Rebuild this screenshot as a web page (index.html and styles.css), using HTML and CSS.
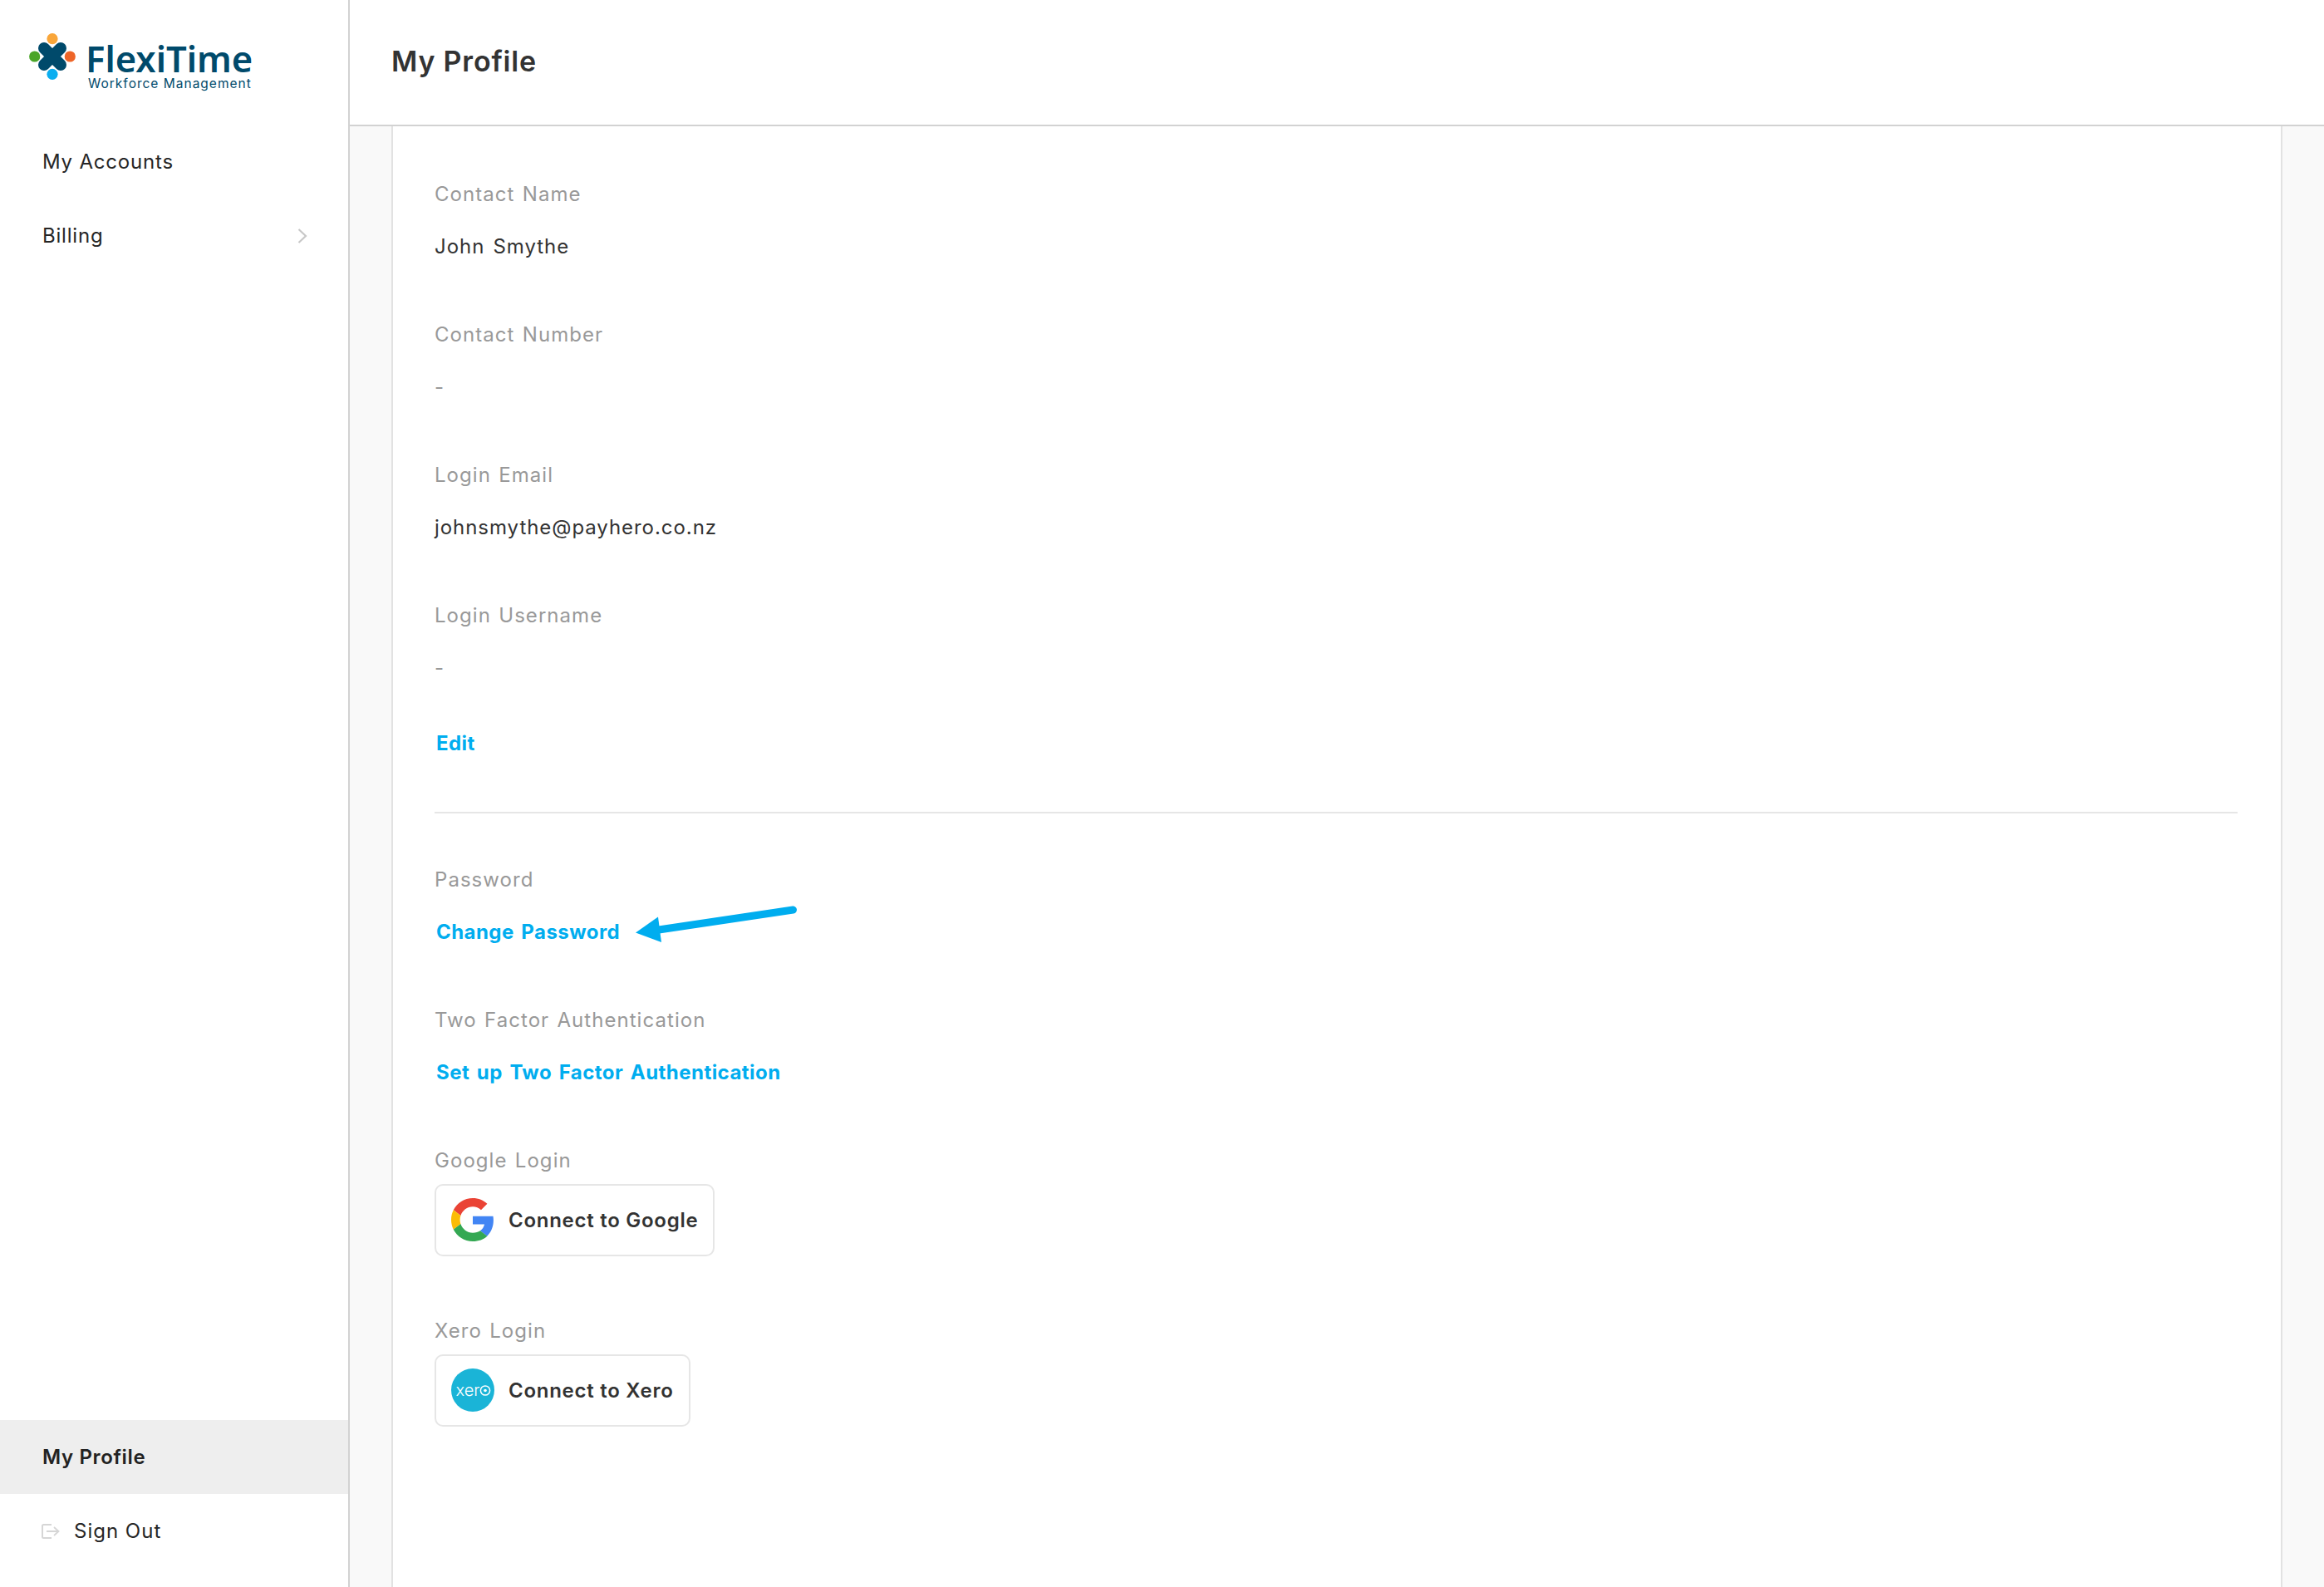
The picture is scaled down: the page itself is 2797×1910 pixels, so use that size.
FILE: index.html
```html
<!DOCTYPE html>
<html lang="en">
<head>
<meta charset="utf-8">
<title>My Profile</title>
<link rel="stylesheet" href="styles.css">
</head>
<body>
<div class="app">
  <aside class="sidebar">
    <div class="brand">
      <svg class="brand-mark" viewBox="0 0 60 60" width="60" height="60" aria-hidden="true">
        <path d="M20 20 L40 40 M40 20 L20 40" stroke="#004a6b" stroke-width="14" stroke-linecap="round" fill="none"/>
        <circle cx="30" cy="8.7" r="6.6" fill="#f9a63a"/>
        <circle cx="8.7" cy="30" r="6.6" fill="#4aa528"/>
        <circle cx="51.3" cy="30" r="6.6" fill="#ee6528"/>
        <circle cx="30" cy="51.3" r="6.6" fill="#0aaef0"/>
      </svg>
      <div class="brand-text">
        <div class="brand-name">FlexiTime</div>
        <div class="brand-sub">Workforce Management</div>
      </div>
    </div>
    <nav class="nav">
      <a class="nav-item">My Accounts</a>
      <a class="nav-item">Billing
        <svg class="chevron" viewBox="0 0 12 20" width="12" height="20" aria-hidden="true"><path d="M1.5 2 L10 10 L1.5 18" fill="none" stroke="#c8c8c8" stroke-width="2.2"/></svg>
      </a>
    </nav>
    <nav class="nav nav-bottom">
      <a class="nav-item is-active">My Profile</a>
      <a class="nav-item nav-signout">
        <svg class="signout-icon" viewBox="0 0 22 18" width="22" height="18" aria-hidden="true">
          <path d="M12 1 H2.5 Q1 1 1 2.5 V15.5 Q1 17 2.5 17 H12" fill="none" stroke="#d6d6d6" stroke-width="2"/>
          <path d="M6 9 H20 M15 4 L20.5 9 L15 14" fill="none" stroke="#d6d6d6" stroke-width="1.8"/>
        </svg>
        <span class="signout-text">Sign Out</span></a>
    </nav>
  </aside>
  <main class="main">
    <header class="topbar"><h1 class="title">My Profile</h1></header>
    <div class="canvas">
      <section class="panel">
        <div class="fields">
          <div class="field"><div class="label">Contact Name</div><div class="value">John Smythe</div></div>
          <div class="field"><div class="label">Contact Number</div><div class="value muted">-</div></div>
          <div class="field"><div class="label">Login Email</div><div class="value">johnsmythe@payhero.co.nz</div></div>
          <div class="field"><div class="label">Login Username</div><div class="value muted">-</div></div>
        </div>
        <a class="link edit">Edit</a>
        <hr class="rule">
        <div class="fields">
          <div class="field">
            <div class="label">Password</div>
            <a class="value link">Change Password</a>
            <svg class="arrow" viewBox="0 0 200 50" width="200" height="50" aria-hidden="true">
              <path d="M191.5 8 L30 32" stroke="#00adef" stroke-width="9" stroke-linecap="round" fill="none"/>
              <path d="M2 35.6 L29 16.6 L33 47 Z" fill="#00adef"/>
            </svg>
          </div>
          <div class="field"><div class="label">Two Factor Authentication</div><a class="value link">Set up Two Factor Authentication</a></div>
          <div class="field">
            <div class="label label-tight">Google Login</div>
            <button class="connect" type="button">
              <svg viewBox="0 0 48 48" width="52" height="52" aria-hidden="true">
                <path fill="#EA4335" d="M24 9.5c3.54 0 6.71 1.22 9.21 3.6l6.85-6.85C35.9 2.38 30.47 0 24 0 14.62 0 6.51 5.38 2.56 13.22l7.98 6.19C12.43 13.72 17.74 9.5 24 9.5z"/>
                <path fill="#4285F4" d="M46.98 24.55c0-1.57-.15-3.09-.38-4.55H24v9.02h12.94c-.58 2.96-2.26 5.48-4.78 7.18l7.73 6c4.51-4.18 7.09-10.36 7.09-17.65z"/>
                <path fill="#FBBC05" d="M10.53 28.59c-.48-1.45-.76-2.99-.76-4.59s.27-3.14.76-4.59l-7.98-6.19C.92 16.46 0 20.12 0 24c0 3.88.92 7.54 2.56 10.78l7.97-6.19z"/>
                <path fill="#34A853" d="M24 48c6.48 0 11.93-2.13 16.03-5.81l-7.73-6c-2.15 1.45-4.92 2.3-8.3 2.3-6.26 0-11.57-4.22-13.47-9.91l-7.98 6.19C6.51 42.62 14.62 48 24 48z"/>
              </svg>
              <span>Connect to Google</span>
            </button>
          </div>
          <div class="field">
            <div class="label label-tight">Xero Login</div>
            <button class="connect" type="button">
              <svg viewBox="0 0 52 52" width="52" height="52" aria-hidden="true">
                <circle cx="26" cy="26" r="26" fill="#1ab4d7"/>
                <text class="xero-word" x="5.5" y="32.5">xer</text>
                <circle cx="41" cy="26.5" r="5.6" fill="none" stroke="#fff" stroke-width="1.5"/>
                <circle cx="41" cy="26.5" r="1.8" fill="#fff"/>
              </svg>
              <span>Connect to Xero</span>
            </button>
          </div>
        </div>
      </section>
    </div>
  </main>
</div>
</body>
</html>
```
FILE: styles.css
```css
* { box-sizing: border-box; }
html, body { margin: 0; height: 100%; }
body {
  font-family: "Inter", "Liberation Sans", sans-serif;
  font-size: 24px;
  color: #333;
  background: #fff;
  overflow: hidden;
}
.app { display: flex; height: 1910px; }

.sidebar {
  width: 421px;
  flex: none;
  display: flex;
  flex-direction: column;
  border-right: 2px solid #d2d2d2;
  background: #fff;
}
.brand {
  height: 150px;
  flex: none;
  display: flex;
  align-items: flex-start;
  gap: 10px;
  padding: 38px 0 0 33px;
}
.brand-mark { flex: none; }
.brand-text { display: flex; flex-direction: column; }
.brand-name {
  font-family: "Noto Sans", sans-serif;
  font-size: 43.5px;
  line-height: 40px;
  margin-top: 11.5px;
  font-weight: 600;
  color: #004a6b;
}
.brand-sub {
  font-size: 15.5px;
  line-height: 18px;
  letter-spacing: 1px;
  color: #004a6b;
  margin-top: 2.5px;
  padding-left: 3px;
}
.nav { display: flex; flex-direction: column; }
.nav-bottom { margin-top: auto; padding-bottom: 23px; }
.nav-item {
  height: 89px;
  flex: none;
  display: flex;
  align-items: center;
  justify-content: space-between;
  padding: 0 49px 0 51px;
  color: #262626;
  font-size: 24px;
  font-weight: 375;
  letter-spacing: 0.8px;
}
.is-active { background: #eee; font-weight: 600; color: #222; letter-spacing: 0.65px; }
.nav-signout { justify-content: flex-start; gap: 17px; padding-left: 50px; }
.signout-text { letter-spacing: 1px; }
.chevron { flex: none; }
.signout-icon { flex: none; }

.main { flex: 1; display: flex; flex-direction: column; min-width: 0; }
.topbar {
  height: 152px;
  flex: none;
  display: flex;
  align-items: center;
  padding: 0 0 3px 50px;
  border-bottom: 2px solid #d2d2d2;
  background: #fff;
}
.title { margin: 0; font-size: 34px; font-weight: 600; color: #333; letter-spacing: 0.8px; }
.canvas { flex: 1; background: #f9f9f9; padding: 0 50px 0 50px; min-height: 0; }
.panel {
  height: 100%;
  background: #fff;
  border-left: 2px solid #e2e2e2;
  border-right: 2px solid #e2e2e2;
  padding: 66px 52px 0 50px;
}
.fields { display: flex; flex-direction: column; gap: 74px; }
.field { position: relative; display: flex; flex-direction: column; align-items: flex-start; }
.label { height: 32px; line-height: 32px; color: #999; font-size: 24px; font-weight: 375; margin-bottom: 31px; letter-spacing: 1.05px; word-spacing: 1.5px; }
.label-tight { margin-bottom: 12px; }
.value { height: 32px; line-height: 32px; color: #333; font-size: 24px; font-weight: 375; letter-spacing: 0.95px; word-spacing: 2.5px; }
.muted { color: #999; }
.link { color: #00adef; font-weight: 700; font-size: 24px; line-height: 32px; padding-left: 2px; letter-spacing: 0.45px; word-spacing: 2.5px; }
.edit { display: block; margin-top: 58.5px; }
.rule { border: 0; border-top: 2px solid #e6e6e6; margin: 66px 0 64px; }
.arrow { position: absolute; left: 240px; top: 44px; }
.connect {
  display: inline-flex;
  align-items: center;
  gap: 17px;
  height: 87px;
  padding: 0 18px 0 18px;
  background: #fff;
  border: 2px solid #e6e6e6;
  border-radius: 10px;
  font-family: inherit;
  font-size: 24px;
  font-weight: 600;
  color: #333;
  letter-spacing: 0.73px;
}
.connect svg { flex: none; }
.xero-word { font-size: 20px; font-weight: 300; fill: #fff; font-family: "Inter", sans-serif; letter-spacing: 0; }
```
